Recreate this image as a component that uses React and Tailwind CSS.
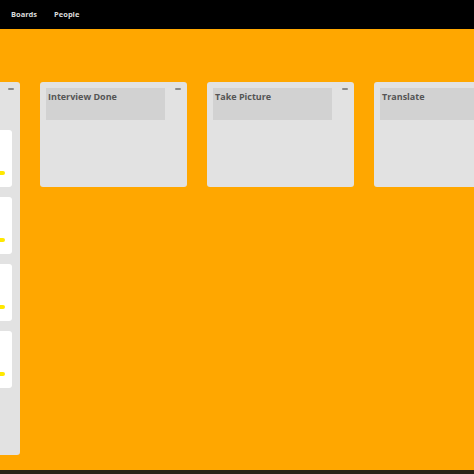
import React from 'react';

const lists = [
  { title: '', cards: 4 },
  { title: 'Interview Done', cards: 0 },
  { title: 'Take Picture', cards: 0 },
  { title: 'Translate', cards: 0 },
];

function Card() {
  return (
    <div className="mt-[10px] h-[57px] rounded-[3px] bg-white flex flex-col justify-end pb-[12px] pr-[7px]">
      <div className="self-end h-[4px] w-[26px] rounded-full bg-[#ffe800]" />
    </div>
  );
}

function List({ title, cards }) {
  return (
    <div className="relative w-[147px] shrink-0 rounded-[3px] bg-[#e2e2e2] pl-[6px] pr-[8px] pt-[6px]">
      <div className="absolute right-[6px] top-[6px] h-[2px] w-[6px] rounded-full bg-[#8a8a8a]" />
      <div className="mr-[14px] h-[32px] bg-[#d2d2d2] px-[2px] pt-[4px] text-[9px] font-bold leading-none text-[#555]">
        {title}
      </div>
      {Array.from({ length: cards }).map((_, i) => (
        <Card key={i} />
      ))}
      <div className="h-[67px]" />
    </div>
  );
}

export default function App() {
  return (
    <div className="flex h-[474px] w-[474px] flex-col overflow-hidden bg-[#ffa700] font-['Open_Sans',sans-serif]">
      <nav className="flex h-[29px] shrink-0 items-center gap-[17px] bg-black px-[11px] text-[7.5px] font-bold text-[#dcdcdc]">
        <span>Boards</span>
        <span>People</span>
      </nav>
      <div className="flex flex-1 items-start gap-[20px] ml-[-127px] pt-[53px]">
        {lists.map((l, i) => (
          <List key={i} title={l.title} cards={l.cards} />
        ))}
      </div>
      <div className="h-[4px] shrink-0 bg-[#2a2418]" />
    </div>
  );
}
